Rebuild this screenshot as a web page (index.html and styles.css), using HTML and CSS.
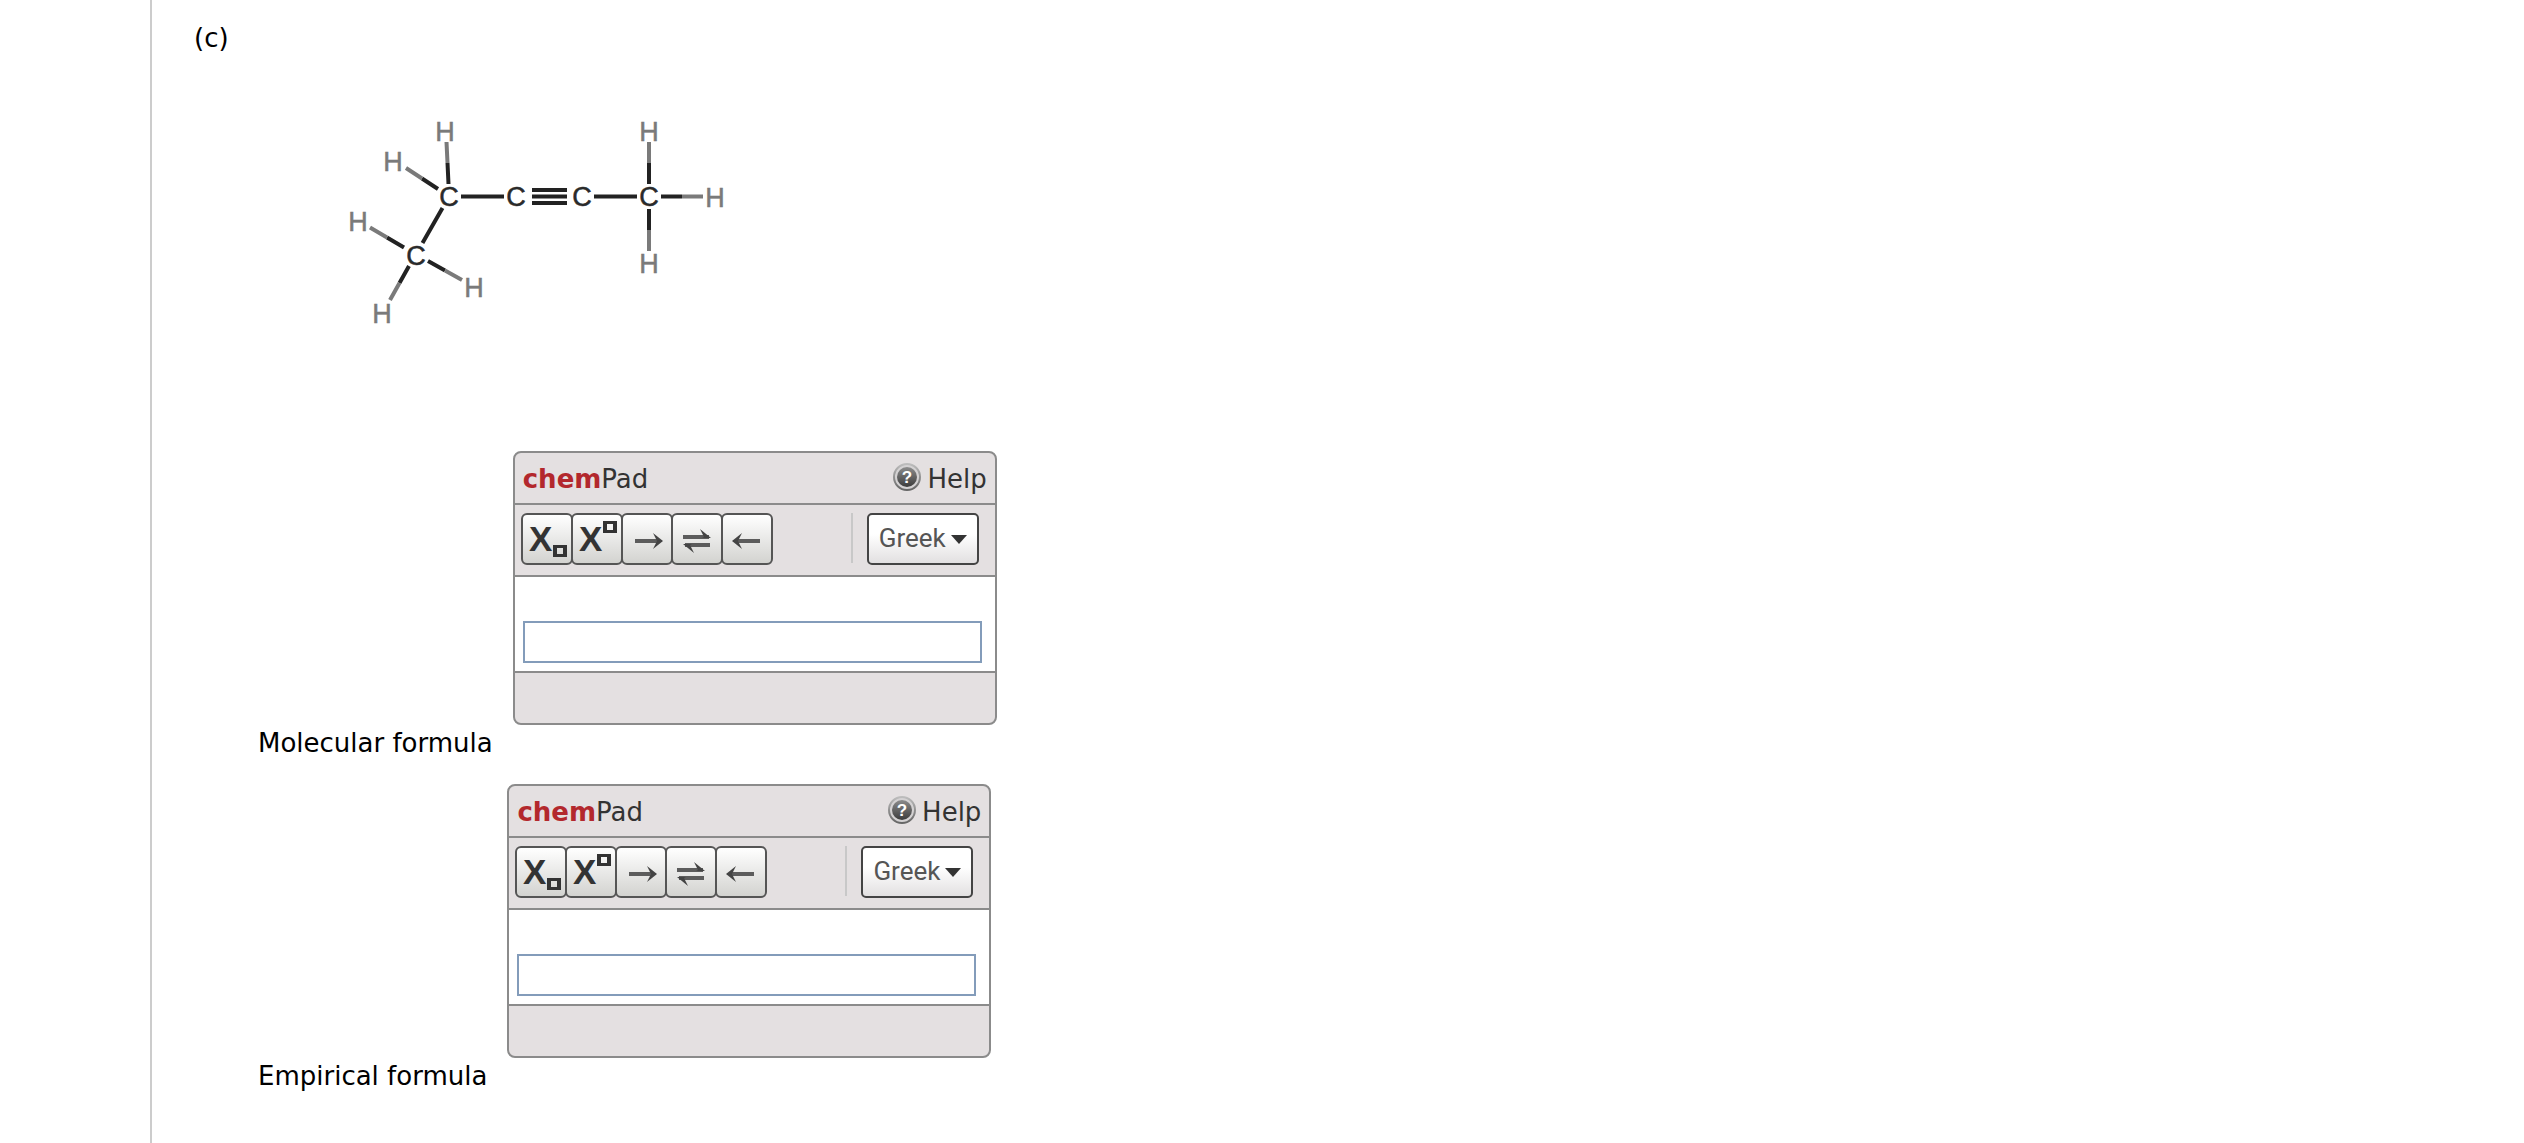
FILE: index.html
```html
<!DOCTYPE html>
<html lang="en">

<head>
    <meta charset="UTF-8">
    <meta name="viewport" content="width=device-width, initial-scale=1.0">
    <title>Molecular and empirical formulas</title>

    <link rel="stylesheet" href="styles.css">
</head>

<body>
    <!-- shared icons -->
    <svg class="defs" width="0" height="0">
        <symbol id="icon-right" viewBox="0 0 48 48">
            <path class="shaft" d="M12 26h25" />
            <path class="tip" d="M30 18l10 8-10 8 4-8z" />
        </symbol>
        <symbol id="icon-equil" viewBox="0 0 48 48">
            <path class="shaft" d="M10 22h26M12 30h25" />
            <path class="tip" d="M27 14l11 9h-9l2-1zM21 38l-11-9h9l-2 1z" />
        </symbol>
        <symbol id="icon-left" viewBox="0 0 48 48">
            <path class="shaft" d="M12 26h25" />
            <path class="tip" d="M19 18l-10 8 10 8-4-8z" />
        </symbol>
        <linearGradient id="ball" x1="0" y1="0" x2="0" y2="1">
            <stop offset="0" stop-color="#8c8c8c" />
            <stop offset="1" stop-color="#3c3c3c" />
        </linearGradient>
        <linearGradient id="ring" x1="0" y1="0" x2="0" y2="1">
            <stop offset="0" stop-color="#bdbdbd" />
            <stop offset="1" stop-color="#666" />
        </linearGradient>
        <symbol id="icon-ball" viewBox="0 0 28 28">
            <circle cx="14" cy="14" r="13" fill="#d4d2d3" stroke="url(#ring)" stroke-width="2" />
            <circle cx="14" cy="14" r="10" fill="url(#ball)" />
        </symbol>
    </svg>

    <main class="question">
        <h1 class="part">(c)</h1>

        <svg class="molecule" width="400" height="220" viewBox="340 110 400 220" role="img" aria-label="Structural formula">
            <g class="bond">
                <path d="M461 196.5H504M594 196.5H637M442.500 208L422.500 243" />
                <path d="M532 190H567M532 196.500H567M532 203H567" />
                <path d="M447.500 163L448.500 184M422 178.500L438 189M387 237.500L404 247.500" />
                <path d="M428 261L445 270.500M409 266L399.500 283" />
                <path d="M649 163V184M649 209V230M661 196.500H682" />
            </g>
            <g class="bond light">
                <path d="M446.500 142L447.500 163M406 168L422 178.500M370 227.500L387 237.500" />
                <path d="M445 270.500L462 280M399.500 283L390 300" />
                <path d="M649 142V163M649 230V251M682 196.500H703" />
            </g>
            <g class="atom">
                <text x="449" y="206">C</text>
                <text x="516" y="206">C</text>
                <text x="582" y="206">C</text>
                <text x="649" y="206">C</text>
                <text x="416" y="265">C</text>
            </g>
            <g class="atom light">
                <text x="445" y="141">H</text>
                <text x="393" y="171">H</text>
                <text x="358" y="231">H</text>
                <text x="474" y="297">H</text>
                <text x="382" y="323">H</text>
                <text x="649" y="141">H</text>
                <text x="715" y="207">H</text>
                <text x="649" y="273">H</text>
            </g>
        </svg>

        <div class="answer">
            <label for="molecular">Molecular formula</label>
            <div class="chempad">
                <div class="header">
                    <span class="brand"><b>chem</b>Pad</span>
                    <a class="help" href="#">
                        <svg width="28" height="28"><use href="#icon-ball" /><text class="mark" x="14" y="20">?</text></svg>
                        Help
                    </a>
                </div>
                <div class="toolbar">
                    <div class="tools">
                        <button type="button" aria-label="Subscript">
                            <svg><text class="x" x="6" y="36">X</text><path class="box" d="M30 30h14v12h-14zM34 33v6h6v-6z" /></svg>
                        </button>
                        <button type="button" aria-label="Superscript">
                            <svg><text class="x" x="6" y="36">X</text><path class="box" d="M30 6h14v12h-14zM34 9v6h6v-6z" /></svg>
                        </button>
                        <button type="button" aria-label="Right arrow"><svg><use href="#icon-right" /></svg></button>
                        <button type="button" aria-label="Equilibrium arrow"><svg><use href="#icon-equil" /></svg></button>
                        <button type="button" aria-label="Left arrow"><svg><use href="#icon-left" /></svg></button>
                    </div>
                    <div class="greek">
                        <select aria-label="Greek letters">
                            <option>Greek</option>
                        </select>
                        <svg class="caret" width="16" height="10" viewBox="0 0 16 10"><path d="M0 0h16L8 9z" /></svg>
                    </div>
                </div>
                <div class="editor">
                    <input type="text" id="molecular">
                </div>
                <div class="footer"></div>
            </div>
        </div>

        <div class="answer">
            <label for="empirical">Empirical formula</label>
            <div class="chempad">
                <div class="header">
                    <span class="brand"><b>chem</b>Pad</span>
                    <a class="help" href="#">
                        <svg width="28" height="28"><use href="#icon-ball" /><text class="mark" x="14" y="20">?</text></svg>
                        Help
                    </a>
                </div>
                <div class="toolbar">
                    <div class="tools">
                        <button type="button" aria-label="Subscript">
                            <svg><text class="x" x="6" y="36">X</text><path class="box" d="M30 30h14v12h-14zM34 33v6h6v-6z" /></svg>
                        </button>
                        <button type="button" aria-label="Superscript">
                            <svg><text class="x" x="6" y="36">X</text><path class="box" d="M30 6h14v12h-14zM34 9v6h6v-6z" /></svg>
                        </button>
                        <button type="button" aria-label="Right arrow"><svg><use href="#icon-right" /></svg></button>
                        <button type="button" aria-label="Equilibrium arrow"><svg><use href="#icon-equil" /></svg></button>
                        <button type="button" aria-label="Left arrow"><svg><use href="#icon-left" /></svg></button>
                    </div>
                    <div class="greek">
                        <select aria-label="Greek letters">
                            <option>Greek</option>
                        </select>
                        <svg class="caret" width="16" height="10" viewBox="0 0 16 10"><path d="M0 0h16L8 9z" /></svg>
                    </div>
                </div>
                <div class="editor">
                    <input type="text" id="empirical">
                </div>
                <div class="footer"></div>
            </div>
        </div>
    </main>
</body>

</html>
```
FILE: styles.css
```css
* {
    box-sizing: border-box;
}

body {
    margin: 0;
    background-color: #fff;
    color: #000;
    font-family: Verdana, 'DejaVu Sans', sans-serif;
    font-size: 26px;
    line-height: 32px;
}

.defs {
    position: absolute;
}

.question {
    min-height: 100vh;
    margin-left: 150px;
    padding: 22px 42px 0;
    border-left: 2px solid #ccc;
}

.part {
    margin: 0 0 56px;
    font-size: 26px;
    font-weight: normal;
}

.molecule {
    display: block;
    margin: 0 0 121px 146px;
}

.bond {
    fill: none;
    stroke: #222;
    stroke-width: 4px;
}

.bond.light {
    stroke: #7a7a7a;
}

.atom {
    fill: #2a2a2a;
    stroke: #2a2a2a;
    stroke-width: 0.5px;
    font-family: Arial, 'Liberation Sans', sans-serif;
    font-size: 27px;
    text-anchor: middle;
}

.atom.light {
    fill: #7a7a7a;
    stroke: #7a7a7a;
}

.answer {
    display: flex;
    align-items: flex-end;
    gap: 20px;
    margin: 0 0 25px 64px;
}

.chempad {
    width: 484px;
    margin-bottom: 34px;
    border: 2px solid #8b8b8b;
    border-radius: 8px;
    background-color: #e4e0e1;
    color: #333;
    overflow: hidden;
}

.header {
    display: flex;
    justify-content: space-between;
    align-items: center;
    height: 52px;
    padding: 2px 8px 0;
    border-bottom: 2px solid #8b8b8b;
}

.brand b {
    color: #b3282d;
}

.help {
    display: flex;
    align-items: center;
    gap: 6px;
    color: #333;
    text-decoration: none;
}

.help svg {
    margin-bottom: 4px;
}

.mark {
    fill: #fff;
    font-family: Arial, 'Liberation Sans', sans-serif;
    font-size: 17px;
    font-weight: bold;
    text-anchor: middle;
}

.toolbar {
    display: flex;
    justify-content: space-between;
    height: 72px;
    padding: 8px 16px 0 6px;
    border-bottom: 2px solid #8b8b8b;
}

.tools {
    display: flex;
}

.tools button {
    width: 52px;
    height: 52px;
    padding: 0;
    border: 2px solid #555;
    border-radius: 6px;
    background: linear-gradient(#fff, #d3d3d0);
}

.tools button + button {
    margin-left: -2px;
}

.tools svg {
    display: block;
    width: 48px;
    height: 48px;
}

.x {
    fill: #333;
    font-family: Arial, 'Liberation Sans', sans-serif;
    font-size: 35px;
    font-weight: bold;
}

.box {
    fill: #333;
    fill-rule: evenodd;
}

.tip {
    fill: #444;
}

.shaft {
    fill: none;
    stroke: #5c5c5c;
    stroke-width: 4px;
}

.greek {
    position: relative;
    height: 50px;
    padding-left: 14px;
    border-left: 2px solid #c8c8c8;
}

.greek select {
    width: 112px;
    height: 52px;
    padding: 0 0 2px 10px;
    border: 2px solid #444;
    border-radius: 5px;
    background: linear-gradient(#fff 40%, #e2e0e1);
    color: #555;
    font-family: Roboto, sans-serif;
    font-size: 26px;
    appearance: none;
}

.caret {
    position: absolute;
    right: 12px;
    top: 22px;
    fill: #333;
    pointer-events: none;
}

.editor {
    padding: 44px 13px 8px 8px;
    border-bottom: 2px solid #8b8b8b;
    background-color: #fff;
}

.editor input {
    display: block;
    width: 100%;
    height: 42px;
    padding: 0 6px;
    border: 2px solid #839cba;
    border-radius: 0;
    background-color: #fff;
    font: inherit;
}

.footer {
    height: 50px;
}
```
